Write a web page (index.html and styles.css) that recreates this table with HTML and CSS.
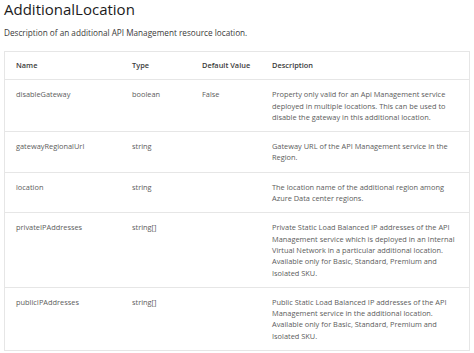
FILE: index.html
```html
<!DOCTYPE html>
<html lang="en">
<head>
<meta charset="utf-8">
<title>AdditionalLocation</title>
<link rel="stylesheet" href="styles.css">
</head>
<body>
<main class="doc">
  <h1 class="doc-title">AdditionalLocation</h1>
  <p class="doc-desc">Description of an additional API Management resource location.</p>
  <table class="props">
    <thead>
      <tr>
        <th class="col-name">Name</th>
        <th class="col-type">Type</th>
        <th class="col-default">Default Value</th>
        <th class="col-desc">Description</th>
      </tr>
    </thead>
    <tbody>
      <tr>
        <td>disableGateway</td>
        <td>boolean</td>
        <td>False</td>
        <td>Property only valid for an Api Management service deployed in multiple locations. This can be used to disable the gateway in this additional location.</td>
      </tr>
      <tr>
        <td>gatewayRegionalUrl</td>
        <td>string</td>
        <td></td>
        <td>Gateway URL of the API Management service in the Region.</td>
      </tr>
      <tr>
        <td>location</td>
        <td>string</td>
        <td></td>
        <td>The location name of the additional region among Azure Data center regions.</td>
      </tr>
      <tr>
        <td>privateIPAddresses</td>
        <td>string[]</td>
        <td></td>
        <td>Private Static Load Balanced IP addresses of the API Management service which is deployed in an Internal Virtual Network in a particular additional location. Available only for Basic, Standard, Premium and Isolated SKU.</td>
      </tr>
      <tr>
        <td>publicIPAddresses</td>
        <td>string[]</td>
        <td></td>
        <td>Public Static Load Balanced IP addresses of the API Management service in the additional location. Available only for Basic, Standard, Premium and Isolated SKU.</td>
      </tr>
    </tbody>
  </table>
</main>
</body>
</html>
```

FILE: styles.css
```css
html, body {
  margin: 0;
  padding: 0;
  background: #ffffff;
}

body {
  font-family: "Open Sans", "Noto Sans", sans-serif;
  color: #1f1f1f;
}

.doc {
  padding: 0 4px;
}

.doc-title {
  margin: 0;
  font-size: 15px;
  line-height: 18px;
  font-weight: 400;
  color: #1b1b1b;
}

.doc-desc {
  margin: 9px 0 12px;
  font-size: 8.2px;
  line-height: 12px;
  color: #3a3a3a;
}

.props {
  width: 466px;
  border-collapse: collapse;
  table-layout: fixed;
  border: 1px solid #e6e6e6;
  font-size: 7.4px;
  line-height: 11.3px;
}

.props th,
.props td {
  text-align: left;
  vertical-align: top;
  padding: 9px 7px 8px 11px;
  border-bottom: 1px solid #e6e6e6;
  white-space: nowrap;
}

.props th:last-child,
.props td:last-child {
  padding-right: 12px;
  white-space: normal;
}

.props th {
  font-weight: 600;
  color: #3b3b3b;
  padding-top: 8px;
}

.props td {
  color: #5c5c5c;
}

.col-name { width: 98px; }
.col-type { width: 52px; }
.col-default { width: 52px; }
.col-desc { width: auto; }
```
